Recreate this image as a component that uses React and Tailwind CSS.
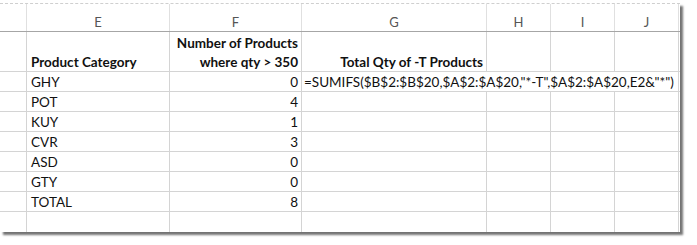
import React from "react";

const cols = [27, 143, 132, 185, 64, 64, 64];
const letters = ["", "E", "F", "G", "H", "I", "J"];

const rows = [
  ["GHY", "0"],
  ["POT", "4"],
  ["KUY", "1"],
  ["CVR", "3"],
  ["ASD", "0"],
  ["GTY", "0"],
  ["TOTAL", "8"],
  ["", ""],
];

const formula = '=SUMIFS($B$2:$B$20,$A$2:$A$20,"*-T",$A$2:$A$20,E2&"*")';

function Cell({ w, className = "", children }) {
  return (
    <div
      className={"shrink-0 border-r border-[#d4d4d4] h-full " + className}
      style={{ width: w }}
    >
      {children}
    </div>
  );
}

export default function App() {
  return (
    <div className="w-[697px] h-[245px] bg-white overflow-hidden pt-[3px]">
      <div
        className="w-[680px] bg-white border-t border-dashed border-[#cfcfcf] shadow-[3px_3px_2px_rgba(0,0,0,0.55)] text-[#111]"
        style={{ fontFamily: "Lato, 'Open Sans', sans-serif" }}
      >
        {/* column letters */}
        <div className="flex h-[28px] border-b border-[#a6a6a6] bg-white">
          {cols.map((w, i) => (
            <Cell
              key={i}
              w={w}
              className="flex items-center justify-center pt-[11px] text-[13px] text-[#555] border-[#e0e0e0]"
            >
              {letters[i]}
            </Cell>
          ))}
        </div>

        {/* header row */}
        <div className="flex h-[40px] border-b border-[#d4d4d4] text-[13.5px] font-bold leading-[15px]">
          <Cell w={cols[0]} />
          <Cell w={cols[1]} className="flex items-end pl-[4px] pb-[1px]">
            Product Category
          </Cell>
          <Cell
            w={cols[2]}
            className="flex flex-col items-end justify-end pr-[3px] pb-[1px] gap-[4px]"
          >
            <span>Number of Products</span>
            <span>where qty &gt; 350</span>
          </Cell>
          <Cell w={cols[3]} className="flex items-end justify-end pr-[3px] pb-[1px] whitespace-nowrap">
            Total Qty of -T Products
          </Cell>
          <Cell w={cols[4]} />
          <Cell w={cols[5]} />
          <Cell w={cols[6]} />
        </div>

        {rows.map(([name, n], r) => (
          <div
            key={r}
            className={
              "flex h-[20px] text-[13.5px] leading-[20px] " +
              (r < rows.length - 1 ? "border-b border-[#d4d4d4]" : "")
            }
          >
            <Cell w={cols[0]} />
            <Cell w={cols[1]} className="pl-[4px]">
              {name}
            </Cell>
            <Cell w={cols[2]} className="text-right pr-[3px]">
              {n}
            </Cell>
            <Cell w={cols[3]} className={"relative " + (r === 0 ? "border-r-transparent" : "")}>
              {r === 0 && (
                <span className="absolute left-[2px] top-0 whitespace-nowrap">
                  {formula}
                </span>
              )}
            </Cell>
            <Cell w={cols[4]} className={r === 0 ? "border-r-transparent" : ""} />
            <Cell w={cols[5]} className={r === 0 ? "border-r-transparent" : ""} />
            <Cell w={cols[6]} />
          </div>
        ))}
      </div>
    </div>
  );
}
